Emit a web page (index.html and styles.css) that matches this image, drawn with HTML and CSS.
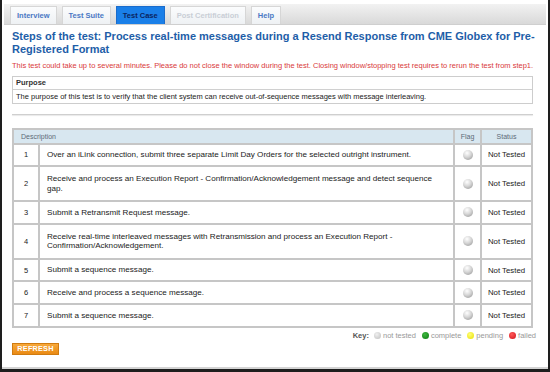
FILE: index.html
```html
<!DOCTYPE html>
<html>
<head>
<meta charset="utf-8">
<link rel="stylesheet" href="styles.css">
</head>
<body>
<div class="frame">
  <div class="tabs">
    <span class="tab">Interview</span>
    <span class="tab">Test Suite</span>
    <span class="tab active">Test Case</span>
    <span class="tab disabled">Post Certification</span>
    <span class="tab">Help</span>
  </div>
  <div class="content">
    <h1 class="title">Steps of the test: Process real-time messages during a Resend Response from CME Globex for Pre-Registered Format</h1>
    <p class="warn">This test could take up to several minutes. Please do not close the window during the test. Closing window/stopping test requires to rerun the test from step1.</p>
    <div class="purpose">
      <div class="purpose-head">Purpose</div>
      <div class="purpose-body">The purpose of this test is to verify that the client system can receive out-of-sequence messages with message interleaving.</div>
    </div>
    <div class="divider"></div>
    <table class="steps">
      <thead>
        <tr><th class="h-desc" colspan="2">Description</th><th class="h-flag">Flag</th><th class="h-status">Status</th></tr>
      </thead>
      <tbody>
        <tr class="r1"><td class="num">1</td><td class="desc">Over an iLink connection, submit three separate Limit Day Orders for the selected outright instrument.</td><td class="flag"><span class="dot"></span></td><td class="status">Not Tested</td></tr>
        <tr class="r2"><td class="num">2</td><td class="desc">Receive and process an Execution Report - Confirmation/Acknowledgement message and detect sequence gap.</td><td class="flag"><span class="dot"></span></td><td class="status">Not Tested</td></tr>
        <tr class="r1"><td class="num">3</td><td class="desc">Submit a Retransmit Request message.</td><td class="flag"><span class="dot"></span></td><td class="status">Not Tested</td></tr>
        <tr class="r2"><td class="num">4</td><td class="desc">Receive real-time interleaved messages with Retransmission and process an Execution Report - Confirmation/Acknowledgement.</td><td class="flag"><span class="dot"></span></td><td class="status">Not Tested</td></tr>
        <tr class="r1"><td class="num">5</td><td class="desc">Submit a sequence message.</td><td class="flag"><span class="dot"></span></td><td class="status">Not Tested</td></tr>
        <tr class="r1"><td class="num">6</td><td class="desc">Receive and process a sequence message.</td><td class="flag"><span class="dot"></span></td><td class="status">Not Tested</td></tr>
        <tr class="r1"><td class="num">7</td><td class="desc">Submit a sequence message.</td><td class="flag"><span class="dot"></span></td><td class="status">Not Tested</td></tr>
      </tbody>
    </table>
    <div class="key">
      <b class="key-label">Key:</b>
      <span class="kd grey"></span><span class="kt">not tested</span>
      <span class="kd green"></span><span class="kt">complete</span>
      <span class="kd yellow"></span><span class="kt">pending</span>
      <span class="kd red"></span><span class="kt">failed</span>
    </div>
    <div class="actions"><button class="refresh">REFRESH</button></div>
  </div>
</div>
</body>
</html>
```

FILE: styles.css
```css
html, body {
  margin: 0;
  padding: 0;
  background: #ffffff;
}
body {
  width: 550px;
  height: 372px;
  overflow: hidden;
  font-family: "Liberation Sans", Arial, sans-serif;
}
.frame {
  box-sizing: border-box;
  width: 550px;
  height: 372px;
  border-left: 2px solid #1e1e1e;
  border-right: 2px solid #1e1e1e;
  border-bottom: 3px solid #1e1e1e;
  background: #fff;
  box-shadow: inset 0 -2px 0 #d4d4d4;
  padding-top: 4px;
}
.tabs {
  display: flex;
  align-items: flex-end;
  gap: 5px;
  height: 20px;
  margin: 0 2px 0 2px;
  padding-left: 6px;
  background: linear-gradient(#f2f2f2, #d9d9d9);
  border-bottom: 1px solid #cfcfcf;
}
.tab {
  display: flex;
  align-items: center;
  height: 18px;
  padding: 0 6px;
  font-size: 7.5px;
  font-weight: bold;
  color: #4a78c4;
  background: linear-gradient(#fbfcfd, #eef1f4);
  border: 1px solid #d6d6d6;
  border-bottom: none;
  box-sizing: border-box;
}
.tab.active {
  background: #1a7fe8;
  color: #0b2460;
  border-color: #1a6ccc;
}
.tab.disabled {
  color: #c9ced6;
}
.content {
  padding: 0 15px 0 10px;
}
.title {
  margin: 5px -12px 0 0;
  font-size: 11px;
  line-height: 13.3px;
  font-weight: bold;
  color: #1e5ea8;
}
.warn {
  margin: 4px -4px 0 0;
  font-size: 7.5px;
  line-height: 10px;
  color: #d93a3c;
}
.purpose {
  margin-top: 5px;
  border: 1px solid #cdcdcd;
  font-size: 7.5px;
  color: #222;
}
.purpose-head {
  height: 12px;
  line-height: 12px;
  padding-left: 3px;
  font-weight: bold;
  color: #333;
  border-bottom: 1px solid #d0d0d0;
}
.purpose-body {
  height: 13px;
  line-height: 13px;
  padding-left: 3px;
}
.divider {
  margin-top: 10px;
  height: 1px;
  background: #cfcfcf;
  box-shadow: 0 1px 1px #e6e6e6;
}
.steps {
  margin-top: 13px;
  width: 521px;
  border-collapse: separate;
  border-spacing: 0;
  border: 1px solid #c6c6c6;
  font-size: 8.1px;
  color: #222;
}
.steps th {
  height: 13px;
  padding: 0;
  font-weight: normal;
  font-size: 7px;
  color: #5d6b78;
  background: #d8e7f0;
  border: 1px solid #c6c6c6;
}
.steps th.h-desc {
  text-align: left;
  padding-left: 7px;
}
.steps td {
  border: 1px solid #c6c6c6;
  padding: 0;
  vertical-align: middle;
}
.r1 td { height: 20.6px; }
.r2 td { height: 33px; }
.num {
  width: 24px;
  text-align: center;
  font-size: 7.5px;
}
.desc {
  padding: 0 6px 0 7px !important;
  line-height: 9.5px;
}
.flag {
  width: 25px;
  text-align: center;
}
.status {
  width: 49px;
  text-align: center;
  font-size: 7.8px;
}
.dot {
  display: inline-block;
  width: 10px;
  height: 10px;
  border-radius: 50%;
  vertical-align: middle;
  background: radial-gradient(circle at 40% 30%, #ffffff 0%, #d6d6d6 45%, #8e8e8e 100%);
}
.key {
  display: flex;
  justify-content: flex-end;
  align-items: center;
  margin-top: 3px;
  margin-right: -3px;
  height: 10px;
  font-size: 7.5px;
  color: #999;
}
.key-label {
  color: #555;
  margin-right: 5px;
}
.kd {
  display: inline-block;
  width: 7px;
  height: 7px;
  border-radius: 50%;
  margin-right: 2px;
}
.kt {
  margin-right: 6px;
}
.kt:last-child { margin-right: 0; }
.kd.grey { background: radial-gradient(circle at 40% 35%, #f0f0f0, #bdbdbd); }
.kd.green { background: radial-gradient(circle at 40% 35%, #3fb83f, #0b7a12); }
.kd.yellow { background: radial-gradient(circle at 40% 35%, #fffe7a, #e8e000); }
.kd.red { background: radial-gradient(circle at 40% 35%, #ff5a5a, #d0101a); }
.actions {
  margin-top: 2px;
}
.refresh {
  display: block;
  width: 47px;
  height: 12px;
  padding: 0;
  border: 1px solid #d07b10;
  background: linear-gradient(#f7a83a, #e98a14);
  color: #fff;
  font-family: "Liberation Sans", Arial, sans-serif;
  font-size: 7.3px;
  font-weight: bold;
  letter-spacing: 0.2px;
  line-height: 10px;
}
```
